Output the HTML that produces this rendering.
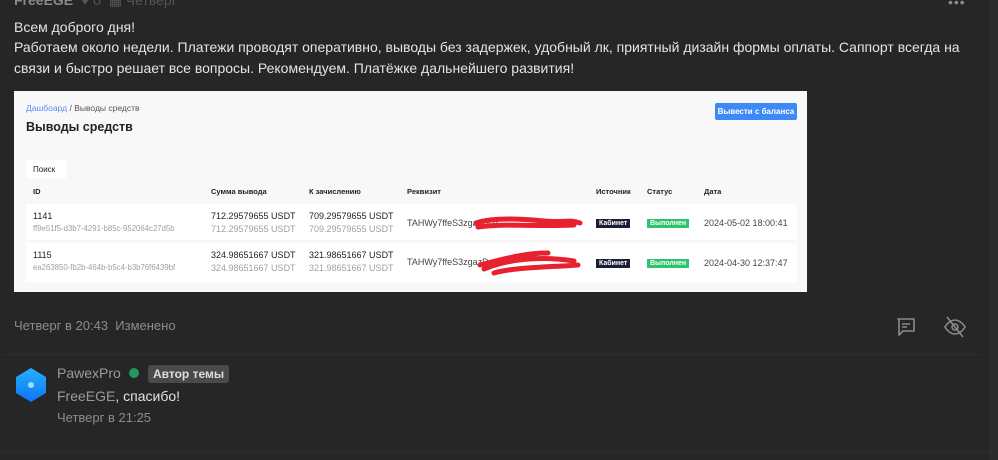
<!DOCTYPE html>
<html><head><meta charset="utf-8"><style>
*{margin:0;padding:0;box-sizing:border-box}
body{width:998px;height:460px;background:#262626;font-family:"Liberation Sans",sans-serif;position:relative;overflow:hidden;color:#e2e2e2}
.abs{position:absolute;white-space:nowrap}
.sb{position:absolute;left:989px;top:0;width:9px;height:460px;background:#2c2c2c}
.txt{left:14px;font-size:14px;color:#e4e4e4}
.shot{position:absolute;left:14px;top:91px;width:793px;height:201px;background:#f8f8f8;font-family:"Liberation Sans",sans-serif;color:#222}
.shot .abs{font-size:9px}
.g{color:#a0a0a0}
.h{font-weight:bold;font-size:7.5px!important;color:#222}
.tag{background:#1a1f36;color:#fff;font-weight:bold;font-size:7px!important;padding:1px 3px}
.ok{background:#2fc46b;color:#fff;font-weight:bold;font-size:7px!important;padding:1px 3px}
.row{position:absolute;left:12px;width:771px;background:#fff}
</style></head><body>
<div class="sb"></div>
<div class="abs" style="left:14px;top:-8px;font-size:14px;color:#8a8a8a;font-weight:bold">FreeEGE <span style="font-weight:normal;color:#555">&nbsp;♥ 0 &nbsp;▦ Четверг</span></div>
<div class="abs" style="left:948px;top:-6px;color:#888;font-size:14px;letter-spacing:1px">•••</div>
<div class="abs txt" style="top:19px">Всем доброго дня!</div>
<div class="abs txt" style="top:39px">Работаем около недели. Платежи проводят оперативно, выводы без задержек, удобный лк, приятный дизайн формы оплаты. Саппорт всегда на</div>
<div class="abs txt" style="top:60px">связи и быстро решает все вопросы. Рекомендуем. Платёжке дальнейшего развития!</div>
<div class="shot">
 <div class="abs" style="left:12px;top:12px;color:#555;font-size:8.5px!important"><span style="color:#5b8ff0">Дашбоард</span> / Выводы средств</div>
 <div class="abs" style="left:12px;top:29px;font-size:12.5px!important;color:#222;font-weight:bold">Выводы средств</div>
 <div class="abs" style="left:701px;top:12px;width:82px;height:17px;background:#3d8af7;border-radius:2px;color:#fff;font-size:8px!important;font-weight:bold;text-align:center;line-height:17px">Вывести с баланса</div>
 <div class="abs" style="left:12px;top:69px;width:40px;height:19px;background:#fff;line-height:19px;padding-left:7px;font-size:8px!important">Поиск</div>
 <div class="abs h" style="left:19px;top:96px">ID</div>
 <div class="abs h" style="left:197px;top:96px">Сумма вывода</div>
 <div class="abs h" style="left:295px;top:96px">К зачислению</div>
 <div class="abs h" style="left:393px;top:96px">Реквизит</div>
 <div class="abs h" style="left:582px;top:96px">Источник</div>
 <div class="abs h" style="left:633px;top:96px">Статус</div>
 <div class="abs h" style="left:690px;top:96px">Дата</div>
 <div class="row" style="top:113px;height:36px"></div>
 <div class="row" style="top:152px;height:39px"></div>
 <div class="abs" style="left:19px;top:120px">1141</div>
 <div class="abs g" style="left:19px;top:133px;font-size:7.8px!important">ff9e51f5-d3b7-4291-b85c-952064c27d5b</div>
 <div class="abs" style="left:197px;top:120px">712.29579655 USDT</div>
 <div class="abs g" style="left:197px;top:133px">712.29579655 USDT</div>
 <div class="abs" style="left:295px;top:120px">709.29579655 USDT</div>
 <div class="abs g" style="left:295px;top:133px">709.29579655 USDT</div>
 <div class="abs" style="left:393px;top:127px;color:#444">TAHWy7ffeS3zgazDcg</div>
 <div class="abs tag" style="left:582px;top:128px">Кабинет</div>
 <div class="abs ok" style="left:633px;top:128px">Выполнен</div>
 <div class="abs" style="left:690px;top:127px;color:#444">2024-05-02 18:00:41</div>
 <div class="abs" style="left:19px;top:159px">1115</div>
 <div class="abs g" style="left:19px;top:172px;font-size:7.8px!important">ea263850-fb2b-464b-b5c4-b3b76f6439bf</div>
 <div class="abs" style="left:197px;top:159px">324.98651667 USDT</div>
 <div class="abs g" style="left:197px;top:172px">324.98651667 USDT</div>
 <div class="abs" style="left:295px;top:159px">321.98651667 USDT</div>
 <div class="abs g" style="left:295px;top:172px">321.98651667 USDT</div>
 <div class="abs" style="left:393px;top:166px;color:#444">TAHWy7ffeS3zgazD</div>
 <div class="abs tag" style="left:582px;top:168px">Кабинет</div>
 <div class="abs ok" style="left:633px;top:168px">Выполнен</div>
 <div class="abs" style="left:690px;top:167px;color:#444">2024-04-30 12:37:47</div>
 <svg class="abs" style="left:460px;top:120px" width="110" height="70"><path d="M2 12 C20 6,50 8,70 10 S95 8,106 12 M4 16 C30 12,60 16,100 14" stroke="#e8212f" stroke-width="5" fill="none" stroke-linecap="round"/><path d="M10 58 C30 50,60 44,100 50 M6 54 C30 48,50 42,74 42 M20 62 C40 56,80 56,104 54" stroke="#e8212f" stroke-width="5" fill="none" stroke-linecap="round"/></svg>
</div>
<div class="abs" style="left:14px;top:318px;font-size:13px;color:#8c8c8c">Четверг в 20:43 &nbsp;Изменено</div>
<svg class="abs" style="left:895px;top:316px" width="22" height="22" viewBox="0 0 22 22" fill="none" stroke="#8a8a8a" stroke-width="1.6" stroke-linejoin="round"><path d="M3 3h16v12H8l-4 4V3z"/><path d="M7 8h8M7 11h5"/></svg>
<svg class="abs" style="left:942px;top:316px" width="26" height="22" viewBox="0 0 26 22" fill="none" stroke="#8a8a8a" stroke-width="1.6"><path d="M3 11c3-5 7-7 10-7s7 2 10 7c-3 5-7 7-10 7s-7-2-10-7z"/><circle cx="13" cy="11" r="3"/><path d="M5 1l16 20"/></svg>
<div class="abs" style="left:2px;top:354px;width:980px;height:1px;background:#2e2e2e"></div>
<div class="abs" style="left:0;top:451px;width:998px;height:1px;background:#2e2e2e"></div>
<svg class="abs" style="left:15px;top:367px" width="32" height="36" viewBox="0 0 32 36"><defs><linearGradient id="a" x1="0" y1="0" x2="0" y2="1"><stop offset="0" stop-color="#22b2ff"/><stop offset="1" stop-color="#1173f5"/></linearGradient></defs><path d="M16 1 L31 10 V26 L16 35 L1 26 V10 Z" fill="url(#a)"/><circle cx="16" cy="18" r="3" fill="#9fd9ff"/></svg>
<div class="abs" style="left:57px;top:365px;font-size:14px;color:#9a9a9a">PawexPro</div>
<div class="abs" style="left:129px;top:368px;width:10px;height:10px;border-radius:50%;background:#1f9a5c"></div>
<div class="abs" style="left:148px;top:365px;height:18px;padding:0 5px;background:#4a4a4a;border-radius:3px;font-size:12px;line-height:18px;color:#ddd;font-weight:bold">Автор темы</div>
<div class="abs" style="left:57px;top:388px;font-size:14px;color:#e4e4e4"><span style="color:#9a9a9a">FreeEGE</span>, спасибо!</div>
<div class="abs" style="left:57px;top:410px;font-size:13px;color:#8c8c8c">Четверг в 21:25</div>
</body></html>
